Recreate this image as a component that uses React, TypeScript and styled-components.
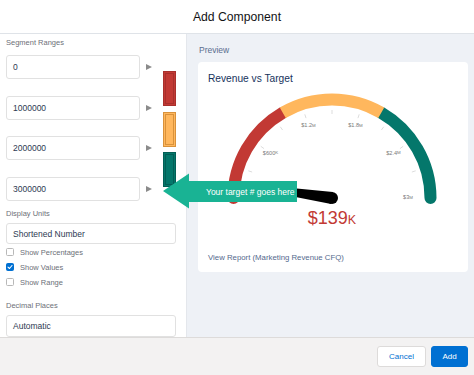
import React from "react";
import styled, { createGlobalStyle } from "styled-components";

const GlobalStyle = createGlobalStyle`
  html, body { margin: 0; padding: 0; width: 474px; height: 375px; overflow: hidden; background: #ffffff; }
  body { font-family: "Liberation Sans", Arial, sans-serif; }
  * { box-sizing: border-box; }
`;

const Page = styled.div`
  width: 474px;
  height: 375px;
  display: flex;
  flex-direction: column;
  background: #ffffff;
`;

const Header = styled.header`
  height: 34px;
  flex: none;
  display: flex;
  align-items: center;
  justify-content: center;
  border-bottom: 1px solid #dfe3e8;
`;

const Title = styled.h1`
  margin: 0;
  font-size: 12.2px;
  font-weight: 400;
  color: #111214;
`;

const Body = styled.div`
  flex: 1;
  min-height: 0;
  display: flex;
  position: relative;
  overflow: hidden;
`;

const LeftPanel = styled.section`
  width: 187px;
  flex: none;
  padding: 4px 0 0 6px;
  border-right: 1px solid #e4e7ec;
  overflow: hidden;
  background: #ffffff;
`;

const FieldLabel = styled.div<{ $mt?: number }>`
  font-size: 7.5px;
  line-height: 10px;
  color: #6d7078;
  margin-top: ${(p) => p.$mt ?? 0}px;
`;

const SegmentArea = styled.div`
  display: flex;
  margin-top: 7px;
`;

const InputColumn = styled.div`
  display: flex;
  flex-direction: column;
  gap: 16.5px;
`;

const SegmentRow = styled.div`
  display: flex;
  align-items: center;
`;

const TextBox = styled.div<{ $w: number; $h: number; $mt?: number }>`
  width: ${(p) => p.$w}px;
  height: ${(p) => p.$h}px;
  margin-top: ${(p) => p.$mt ?? 0}px;
  border: 1px solid #e1e1e1;
  border-radius: 3px;
  padding-left: 6px;
  display: flex;
  align-items: center;
  font-size: 8.5px;
  color: #2d3a52;
  background: #ffffff;
`;

const Caret = styled.span`
  width: 0;
  height: 0;
  margin-left: 5.5px;
  border-left: 6px solid #8b8b8b;
  border-top: 3.5px solid transparent;
  border-bottom: 3.5px solid transparent;
`;

const SwatchColumn = styled.div`
  display: flex;
  flex-direction: column;
  gap: 5.5px;
  margin-top: 16px;
  margin-left: 11px;
`;

const Swatch = styled.div<{ $fill: string; $edge: string }>`
  width: 13px;
  height: 35px;
  background: ${(p) => p.$fill};
  border: 1px solid ${(p) => p.$edge};
  box-shadow: inset 0 0 0 1px ${(p) => p.$fill}, inset 0 0 0 2px ${(p) => p.$edge};
`;

const CheckList = styled.div`
  display: flex;
  flex-direction: column;
  margin-top: 0.5px;
`;

const CheckRow = styled.label`
  height: 15px;
  display: flex;
  align-items: center;
  gap: 6px;
  font-size: 7.5px;
  color: #6d7078;
`;

const Box = styled.span<{ $on?: boolean }>`
  width: 8px;
  height: 8px;
  border-radius: 1.5px;
  border: 1px solid ${(p) => (p.$on ? "#0070d2" : "#b8b8b8")};
  background: ${(p) => (p.$on ? "#0070d2" : "#ffffff")};
  display: flex;
  align-items: center;
  justify-content: center;
`;

const RightPanel = styled.section`
  flex: 1;
  background: #eef1f6;
  padding: 11px 6px 0 11px;
`;

const PreviewLabel = styled.div`
  font-size: 8.5px;
  line-height: 10px;
  color: #5a6d8e;
  padding-left: 1px;
`;

const Card = styled.div`
  margin-top: 7px;
  background: #ffffff;
  border-radius: 4px;
  padding: 10px 10px 9px;
`;

const CardTitle = styled.div`
  font-size: 10.2px;
  line-height: 14px;
  color: #16325c;
`;

const GaugeSvg = styled.svg`
  display: block;
  margin-top: 2px;
`;

const Value = styled.div`
  text-align: center;
  font-size: 18px;
  line-height: 20px;
  color: #c23934;
  padding-right: 2px;
`;

const SmallCap = styled.span`
  font-size: 12.5px;
`;

const ReportLink = styled.div`
  margin-top: 23px;
  font-size: 7.8px;
  line-height: 10px;
  color: #54698d;
`;

const Footer = styled.footer`
  height: 38px;
  flex: none;
  background: #f3f2f2;
  border-top: 1px solid #dddbda;
  display: flex;
  align-items: center;
  justify-content: flex-end;
  gap: 5px;
  padding-right: 6px;
`;

const Button = styled.button<{ $primary?: boolean; $w: number }>`
  width: ${(p) => p.$w}px;
  height: 21px;
  padding: 0;
  border-radius: 3px;
  font-family: inherit;
  font-size: 8px;
  border: 1px solid ${(p) => (p.$primary ? "#0070d2" : "#dddbda")};
  background: ${(p) => (p.$primary ? "#0070d2" : "#ffffff")};
  color: ${(p) => (p.$primary ? "#ffffff" : "#0070d2")};
`;

const Callout = styled.div`
  position: absolute;
  left: 163px;
  top: 139px;
  width: 134px;
  height: 36px;
`;

const CalloutText = styled.span`
  position: absolute;
  left: 43px;
  top: 8px;
  height: 21px;
  display: flex;
  align-items: center;
  font-size: 8.5px;
  color: #ffffff;
  white-space: nowrap;
`;

const CX = 124;
const CY = 110;
const R = 98.5;

const pt = (deg: number, r: number) => {
  const a = (deg * Math.PI) / 180;
  return [CX + r * Math.cos(a), CY - r * Math.sin(a)];
};

const arc = (from: number, to: number) => {
  const [x1, y1] = pt(from, R);
  const [x2, y2] = pt(to, R);
  return `M ${x1} ${y1} A ${R} ${R} 0 0 1 ${x2} ${y2}`;
};

const labels: { deg: number; main: string; unit: string }[] = [
  { deg: 144, main: "$600", unit: "K" },
  { deg: 108, main: "$1.2", unit: "M" },
  { deg: 72, main: "$1.8", unit: "M" },
  { deg: 36, main: "$2.4", unit: "M" },
  { deg: 0, main: "$3", unit: "M" },
];

const needle = () => {
  const deg = 180 - (139000 / 3000000) * 180;
  const a = (deg * Math.PI) / 180;
  const dx = Math.cos(a);
  const dy = -Math.sin(a);
  const px = -dy;
  const py = dx;
  const base = 6;
  const tipW = 1.8;
  const len = 88;
  const tx = CX + dx * len;
  const ty = CY + dy * len;
  return `M ${CX + px * base} ${CY + py * base} L ${tx + px * tipW} ${ty + py * tipW} L ${tx - px * tipW} ${ty - py * tipW} L ${CX - px * base} ${CY - py * base} Z`;
};

function Gauge() {
  const ticks = [162, 144, 126, 108, 90, 72, 54, 36, 18];
  return (
    <GaugeSvg width={249} height={120} viewBox="0 0 249 120">
      <path d={arc(180, 120)} stroke="#c23934" strokeWidth={12} fill="none" strokeLinecap="round" />
      <path d={arc(60, 0)} stroke="#04776b" strokeWidth={12} fill="none" strokeLinecap="round" />
      <path d={arc(120, 60)} stroke="#ffb75d" strokeWidth={12} fill="none" />
      {ticks.map((d) => {
        const [x1, y1] = pt(d, 84);
        const [x2, y2] = pt(d, 88);
        return <line key={d} x1={x1} y1={y1} x2={x2} y2={y2} stroke="#d4d4d4" strokeWidth={0.8} />;
      })}
      {labels.map((l) => {
        const [x, y] = pt(l.deg, 76);
        return (
          <text key={l.deg} x={x} y={y} fontSize={5.6} fill="#7a7a7a" textAnchor="middle" dominantBaseline="middle">
            {l.main}
            <tspan fontSize={4.4}>{l.unit}</tspan>
          </text>
        );
      })}
      <path d={needle()} fill="#000000" />
      <circle cx={CX} cy={CY} r={6} fill="#000000" />
    </GaugeSvg>
  );
}

const Check = () => (
  <svg width="6" height="6" viewBox="0 0 6 6">
    <path d="M1 3.1 L2.5 4.5 L5 1.5" stroke="#ffffff" strokeWidth="1.1" fill="none" strokeLinecap="round" strokeLinejoin="round" />
  </svg>
);

export default function App() {
  const segments = ["0", "1000000", "2000000", "3000000"];
  const swatches = [
    { fill: "#c23934", edge: "#a8302c" },
    { fill: "#ffb75d", edge: "#d9923b" },
    { fill: "#04776b", edge: "#035e55" },
  ];
  return (
    <Page>
      <GlobalStyle />
      <Header>
        <Title>Add Component</Title>
      </Header>
      <Body>
        <LeftPanel>
          <FieldLabel>Segment Ranges</FieldLabel>
          <SegmentArea>
            <InputColumn>
              {segments.map((s) => (
                <SegmentRow key={s}>
                  <TextBox $w={134} $h={24}>{s}</TextBox>
                  <Caret />
                </SegmentRow>
              ))}
            </InputColumn>
            <SwatchColumn>
              {swatches.map((s) => (
                <Swatch key={s.fill} $fill={s.fill} $edge={s.edge} />
              ))}
            </SwatchColumn>
          </SegmentArea>
          <FieldLabel $mt={8.5}>Display Units</FieldLabel>
          <TextBox $w={170} $h={21} $mt={4}>Shortened Number</TextBox>
          <CheckList>
            <CheckRow>
              <Box />
              Show Percentages
            </CheckRow>
            <CheckRow>
              <Box $on>
                <Check />
              </Box>
              Show Values
            </CheckRow>
            <CheckRow>
              <Box />
              Show Range
            </CheckRow>
          </CheckList>
          <FieldLabel $mt={11.5}>Decimal Places</FieldLabel>
          <TextBox $w={170} $h={22} $mt={4}>Automatic</TextBox>
        </LeftPanel>
        <RightPanel>
          <PreviewLabel>Preview</PreviewLabel>
          <Card>
            <CardTitle>Revenue vs Target</CardTitle>
            <Gauge />
            <Value>
              $139<SmallCap>K</SmallCap>
            </Value>
            <ReportLink>View Report (Marketing Revenue CFQ)</ReportLink>
          </Card>
        </RightPanel>
        <Callout>
          <svg width="134" height="36" viewBox="0 0 134 36">
            <polygon points="0,18 26,0.5 26,8 134,8 134,29 26,29 26,35.5" fill="#19b394" />
          </svg>
          <CalloutText>Your target # goes here</CalloutText>
        </Callout>
      </Body>
      <Footer>
        <Button $w={49}>Cancel</Button>
        <Button $w={37} $primary>Add</Button>
      </Footer>
    </Page>
  );
}
